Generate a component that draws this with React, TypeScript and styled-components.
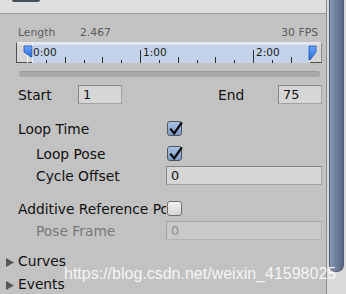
import React from "react";
import styled, { createGlobalStyle } from "styled-components";

const GlobalStyle = createGlobalStyle`
  html, body { margin: 0; padding: 0; }
  body {
    width: 346px;
    height: 294px;
    overflow: hidden;
    background: #c2c2c2;
    font-family: "DejaVu Sans", Verdana, sans-serif;
    color: #111;
  }
`;

const Window = styled.div`
  position: relative;
  display: flex;
  width: 346px;
  height: 294px;
  overflow: hidden;
`;

const Inspector = styled.div`
  width: 326px;
  flex: none;
  display: flex;
  flex-direction: column;
  border-right: 1px solid #8d8d8d;
  background: #c2c2c2;
`;

const HeaderStrip = styled.div`
  height: 13px;
  flex: none;
  background: #dfdfdf;
  border-bottom: 1px solid #9b9b9b;
`;

const HeaderButton = styled.div`
  margin-left: 12px;
  width: 28px;
  height: 2px;
  background: #47515c;
  border-radius: 0 0 2px 2px;
`;

const InfoRow = styled.div`
  display: flex;
  margin-top: 12px;
  height: 13px;
  padding: 0 8px 0 18px;
  font-size: 10.8px;
  line-height: 13px;
  color: #5c5c5c;
`;

const InfoLabel = styled.span`
  width: 62px;
  flex: none;
`;

const InfoRight = styled.span`
  margin-left: auto;
`;

const Timeline = styled.div`
  position: relative;
  margin: 3px 0 0 16px;
  width: 306px;
  height: 22px;
  box-sizing: border-box;
  border-top: 1px solid #ececec;
  border-left: 1px solid #4d4d4d;
  border-bottom: 1px solid #4d4d4d;
  border-right: 1px solid #8a8a8a;
  background: #d6d6d6;
`;

const Ruler = styled.svg`
  position: absolute;
  left: 0;
  top: 0;
  display: block;
`;

const TickLabel = styled.span`
  position: absolute;
  top: 3px;
  font-size: 10.5px;
  line-height: 12px;
  color: #1c1c1c;
`;

const HScroll = styled.div`
  margin: 8px 6px 0 19px;
  height: 6px;
  border-radius: 3px;
  background: #a8a8a8;
  box-shadow: inset 0 1px 0 #9c9c9c;
`;

const FieldRow = styled.div<{ $top: number; $pad?: number }>`
  display: flex;
  align-items: center;
  height: 19px;
  margin-top: ${(p) => p.$top}px;
  padding: 0 4px 0 ${(p) => (p.$pad ?? 18)}px;
  font-size: 13.8px;
  line-height: 19px;
`;

const Label = styled.span<{ $w: number; $indent?: number; $disabled?: boolean }>`
  flex: none;
  box-sizing: border-box;
  padding-top: 2px;
  width: ${(p) => p.$w - (p.$indent ?? 0)}px;
  margin-left: ${(p) => p.$indent ?? 0}px;
  white-space: nowrap;
  overflow: hidden;
  color: ${(p) => (p.$disabled ? "#787878" : "#111")};
`;

const TextField = styled.div<{ $w?: number; $disabled?: boolean }>`
  box-sizing: border-box;
  height: 19px;
  ${(p) => (p.$w ? `width: ${p.$w}px; flex: none;` : "flex: 1;")}
  padding-left: 4px;
  font-size: 12.8px;
  line-height: 17px;
  background: ${(p) => (p.$disabled ? "#c9c9c9" : "#d6d6d6")};
  border: 1px solid;
  border-color: ${(p) =>
    p.$disabled ? "#a3a3a3 #b3b3b3 #b3b3b3 #a3a3a3" : "#858585 #a2a2a2 #a2a2a2 #858585"};
  color: ${(p) => (p.$disabled ? "#8a8a8a" : "#111")};
`;

const Spacer = styled.div`
  margin-left: auto;
`;

const CheckBox = styled.div<{ $checked?: boolean }>`
  position: relative;
  box-sizing: border-box;
  width: 15px;
  height: 15px;
  margin-left: 1px;
  flex: none;
  border-radius: 3px;
  border: 1px solid ${(p) => (p.$checked ? "#4e5560" : "#707070")};
  background: ${(p) =>
    p.$checked
      ? "linear-gradient(#a9c0e0, #7f9dc8)"
      : "linear-gradient(#f4f4f4, #d2d2d2)"};
  svg {
    position: absolute;
    left: -1px;
    top: -2px;
  }
`;

const Foldout = styled.div<{ $top: number }>`
  display: flex;
  align-items: center;
  height: 19px;
  margin-top: ${(p) => p.$top}px;
  padding-left: 6px;
  font-size: 13.8px;
  line-height: 19px;
  color: #111;
  svg {
    margin-right: 4px;
    margin-top: 1px;
  }
`;

const ScrollColumn = styled.div`
  width: 19px;
  flex: none;
  display: flex;
  flex-direction: column;
  background: #d9d9d9;
`;

const ScrollThumb = styled.div`
  margin: 0 2px;
  height: 272px;
  box-sizing: border-box;
  border: 1px solid #4f5e78;
  border-top: none;
  border-radius: 0 0 7px 7px;
  background: linear-gradient(to right, #8c9bb4, #7385a3 35%, #63748f 75%, #56667f);
`;

const Watermark = styled.div`
  position: absolute;
  left: 64px;
  top: 265px;
  font-family: "Liberation Sans", Arial, sans-serif;
  font-size: 16px;
  line-height: 18px;
  color: rgba(255, 255, 255, 0.85);
  white-space: nowrap;
`;

const PX_PER_SEC = 113;
const ZERO = 10;

const Check = () => (
  <svg width="17" height="17" viewBox="0 0 17 17">
    <path
      d="M4 9.5 L7.2 13.4 L14.2 3.4"
      fill="none"
      stroke="#0a0a0a"
      strokeWidth="2.3"
      strokeLinecap="square"
    />
  </svg>
);

const Triangle = () => (
  <svg width="8" height="9" viewBox="0 0 8 9">
    <path d="M0 0 L8 4.5 L0 9 Z" fill="#565656" />
  </svg>
);

function TimelineRuler() {
  const ticks = [];
  for (let k = 1; k <= 14; k++) {
    const x = Math.round(ZERO + (k * PX_PER_SEC) / 6) + 0.5;
    const y1 = k % 6 === 0 ? 7 : k % 2 === 0 ? 14 : 17;
    ticks.push(<line key={k} x1={x} x2={x} y1={y1} y2={20} stroke="#2e2e2e" strokeWidth="1" />);
  }
  const labels = ["0:00", "1:00", "2:00"];
  return (
    <Timeline>
      <Ruler width="304" height="20" viewBox="0 0 304 20">
        <defs>
          <linearGradient id="mk" x1="0" y1="0" x2="0" y2="1">
            <stop offset="0" stopColor="#6aa6ff" />
            <stop offset="1" stopColor="#2a6ad8" />
          </linearGradient>
        </defs>
        <rect x="0" y="0" width="304" height="2" fill="#e2e2e2" />
        <rect x="15" y="0" width="277" height="20" fill="#c4d3e9" />
        <rect x="15" y="0" width="277" height="2" fill="#dfe8f4" />
        <line x1="15.5" x2="15.5" y1="0" y2="20" stroke="#eef2f8" />
        {ticks}
        <line x1="10.5" x2="10.5" y1="11" y2="20" stroke="#ffffff" />
        <polygon points="7,3 15,3 15,14 14,14 7,9" fill="url(#mk)" stroke="#1f55b0" strokeWidth="0.8" />
        <line x1="292.5" x2="292.5" y1="16" y2="20" stroke="#ffffff" />
        <polygon points="292,3 299,3 299,9 293,17 292,17" fill="url(#mk)" stroke="#1f55b0" strokeWidth="0.8" />
      </Ruler>
      {labels.map((l, i) => (
        <TickLabel key={l} style={{ left: ZERO + i * PX_PER_SEC + (i === 0 ? 6 : 3) }}>
          {l}
        </TickLabel>
      ))}
    </Timeline>
  );
}

export default function App() {
  return (
    <>
      <GlobalStyle />
      <Window>
        <Inspector>
          <HeaderStrip>
            <HeaderButton />
          </HeaderStrip>
          <InfoRow>
            <InfoLabel>Length</InfoLabel>
            <span>2.467</span>
            <InfoRight>30 FPS</InfoRight>
          </InfoRow>
          <TimelineRuler />
          <HScroll />
          <FieldRow $top={8}>
            <Label $w={60}>Start</Label>
            <TextField $w={44}>1</TextField>
            <Spacer />
            <Label $w={60}>End</Label>
            <TextField $w={44}>75</TextField>
          </FieldRow>
          <FieldRow $top={15}>
            <Label $w={148}>Loop Time</Label>
            <CheckBox $checked>
              <Check />
            </CheckBox>
          </FieldRow>
          <FieldRow $top={6}>
            <Label $w={148} $indent={18}>Loop Pose</Label>
            <CheckBox $checked>
              <Check />
            </CheckBox>
          </FieldRow>
          <FieldRow $top={3}>
            <Label $w={148} $indent={18}>Cycle Offset</Label>
            <TextField>0</TextField>
          </FieldRow>
          <FieldRow $top={14}>
            <Label $w={148}>Additive Reference Pose</Label>
            <CheckBox />
          </FieldRow>
          <FieldRow $top={3}>
            <Label $w={148} $indent={18} $disabled>Pose Frame</Label>
            <TextField $disabled>0</TextField>
          </FieldRow>
          <Foldout $top={12}>
            <Triangle />
            Curves
          </Foldout>
          <Foldout $top={4}>
            <Triangle />
            Events
          </Foldout>
        </Inspector>
        <ScrollColumn>
          <ScrollThumb />
        </ScrollColumn>
        <Watermark>https://blog.csdn.net/weixin_41598025</Watermark>
      </Window>
    </>
  );
}
